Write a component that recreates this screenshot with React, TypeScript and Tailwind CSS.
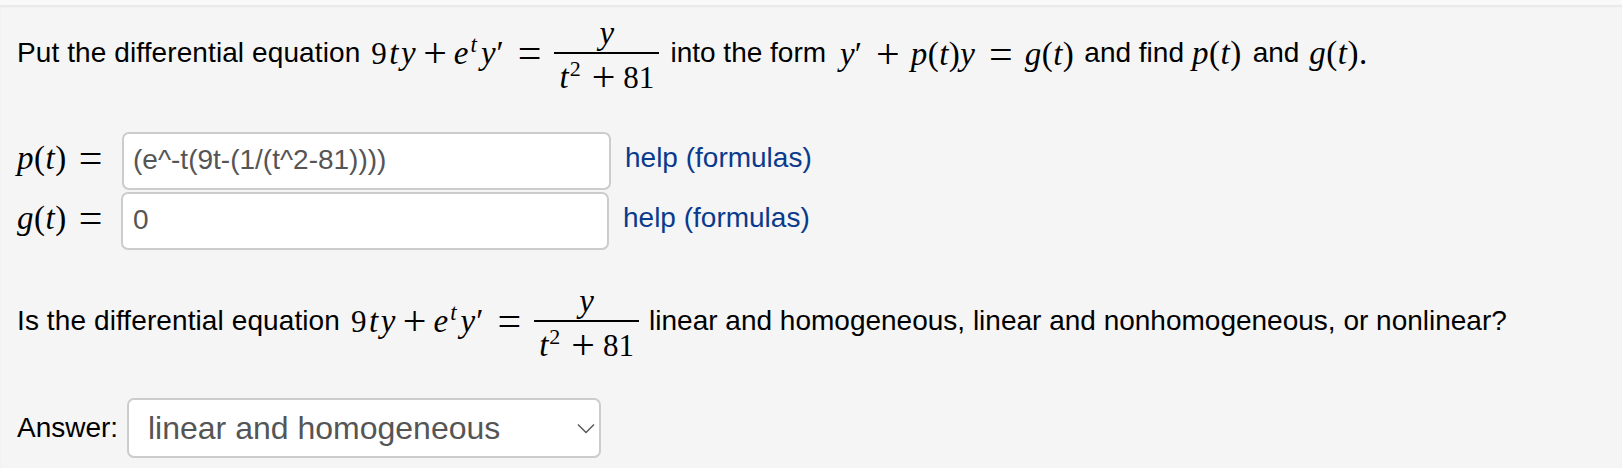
import { ReactNode } from "react";

const mathFont = "font-['Liberation_Serif',serif] text-[33px] leading-[31px] text-black whitespace-nowrap";

function I({ children }: { children: ReactNode }) {
  return <i className="italic">{children}</i>;
}

// + and = are drawn wider in the reference than the serif font gives
function Plus() {
  return <span className="text-[42px] leading-[31px] relative top-[3px]">+</span>;
}

function Equals() {
  return <span className="text-[42px] leading-[31px] relative top-[3px]">=</span>;
}

function Fn({ name }: { name: string }) {
  return (
    <span className="tracking-[0.5px]">
      <I>{name}</I>(<I>t</I>)
    </span>
  );
}

function Frac({ className }: { className: string }) {
  return (
    <span className={`inline-flex flex-col items-center w-[105px] h-[76px] ${className}`}>
      <span className="h-[37px] flex items-end pb-[3px]">
        <I>y</I>
      </span>
      <span className="w-full h-[1.5px] bg-black shrink-0" />
      <span className="h-[37px] pt-[5px]">
        <I>t</I>
        <span className="text-[22px] relative top-[-12px] ml-[1px]">2</span>
        <span className="ml-[11px] mr-[8px]">
          <Plus />
        </span>
        <span className="text-[31px]">81</span>
      </span>
    </span>
  );
}

function Equation({ className }: { className: string }) {
  return (
    <span className={`${mathFont} inline-flex items-center ${className}`}>
      <span>
        <span className="tracking-[2.5px]">
          <span className="text-[31px]">9</span>
          <I>ty</I>
        </span>
        <span className="ml-[5px] mr-[7px]">
          <Plus />
        </span>
        <I>e</I>
        <span className="text-[23px] relative top-[-12px] ml-[2px] mr-[4px]">
          <I>t</I>
        </span>
        <I>y</I>
        <span className="ml-[1px] mr-[14px]">′</span>
        <Equals />
      </span>
      <Frac className="ml-[13px]" />
    </span>
  );
}

function AnswerRow({
  name,
  value,
  labelClass,
  inputClass,
}: {
  name: string;
  value: string;
  labelClass: string;
  inputClass: string;
}) {
  return (
    <div className="flex items-center">
      <span className={`${mathFont} shrink-0 mb-[8px] ${labelClass}`}>
        <Fn name={name} />
        <span className="ml-[12px]">
          <Equals />
        </span>
      </span>
      <input
        readOnly
        value={value}
        className={`rounded-[7px] border-2 border-[#cccccc] bg-white pb-[2px] text-[28px] text-[#555555] outline-none ${inputClass}`}
      />
      <a className="ml-[14px] mb-[6px] text-[#0a3a8c]">help (formulas)</a>
    </div>
  );
}

export default function App() {
  return (
    <div className="w-[1622px] h-[468px] bg-[#f9f9f9] font-['Liberation_Sans',sans-serif] text-[28px] text-black overflow-hidden">
      <div className="h-[5px]" />
      <div className="h-[463px] bg-[#f5f5f5] pl-[17px] shadow-[inset_0_2px_2px_rgba(0,0,0,0.05)] pt-[10px]">
        <div className="flex items-center h-[76px]">
          <span className="tracking-[0.1px]">Put the differential equation</span>
          <Equation className="ml-[11px]" />
          <span className="ml-[11px]">into the form</span>
          <span className={`${mathFont} ml-[14px]`}>
            <I>y</I>′
            <span className="ml-[14px] mr-[11px]">
              <Plus />
            </span>
            <Fn name="p" />
            <I>y</I>
            <span className="ml-[14px] mr-[12px]">
              <Equals />
            </span>
            <Fn name="g" />
          </span>
          <span className="ml-[10px]">and find</span>
          <span className={`${mathFont} ml-[8px]`}>
            <Fn name="p" />
          </span>
          <span className="ml-[11px]">and</span>
          <span className={`${mathFont} ml-[10px]`}>
            <Fn name="g" />
            <span>.</span>
          </span>
        </div>

        <div className="mt-[41px] flex flex-col gap-[2px]">
          <AnswerRow
            name="p"
            value="(e^-t(9t-(1/(t^2-81))))"
            labelClass="w-[105px]"
            inputClass="w-[489px] h-[58px] pl-[9px]"
          />
          <AnswerRow
            name="g"
            value="0"
            labelClass="w-[104px]"
            inputClass="w-[488px] h-[58px] pl-[10px]"
          />
        </div>

        <div className="flex items-center h-[76px] mt-[33px]">
          <span className="tracking-[0.1px]">Is the differential equation</span>
          <Equation className="ml-[11px]" />
          <span className="ml-[10px]">linear and homogeneous, linear and nonhomogeneous, or nonlinear?</span>
        </div>

        <div className="flex items-center mt-[39px]">
          <span className="w-[110px] shrink-0">Answer:</span>
          <div className="relative">
            <select className="appearance-none block w-[474px] h-[60px] rounded-[7px] border-2 border-[#cccccc] bg-white pl-[19px] text-[32px] text-[#555555] outline-none">
              <option>linear and homogeneous</option>
            </select>
            <svg className="absolute right-[6px] top-[25px]" width="18" height="11" viewBox="0 0 18 11" fill="none">
              <path d="M1 1.5 L9 9.5 L17 1.5" stroke="#555555" strokeWidth="1.4" />
            </svg>
          </div>
        </div>
      </div>
    </div>
  );
}
